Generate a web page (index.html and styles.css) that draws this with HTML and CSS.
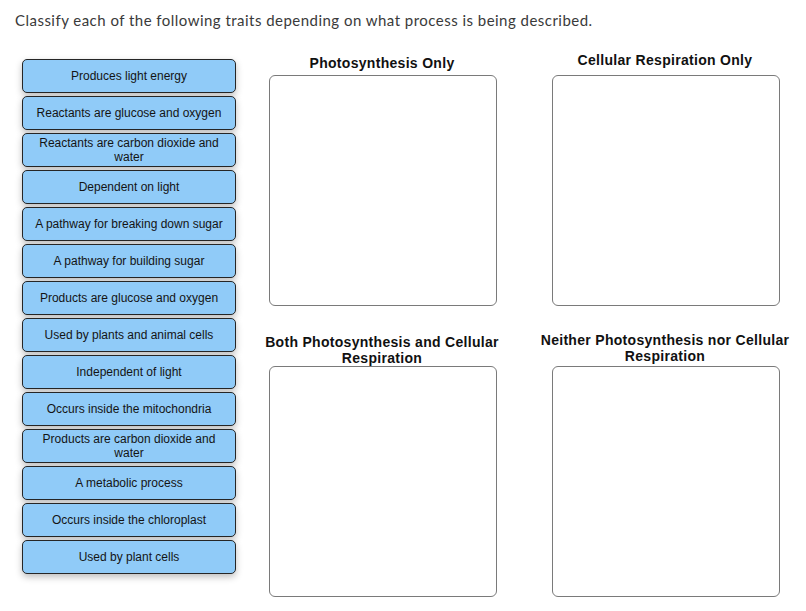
FILE: index.html
```html
<!DOCTYPE html>
<html lang="en">
<head>
<meta charset="utf-8">
<title>Classify traits</title>
<link rel="stylesheet" href="styles.css">
</head>
<body>
<p class="prompt">Classify each of the following traits depending on what process is being described.</p>
<div class="workspace">
  <ul class="bank">
    <li class="chip">Produces light energy</li>
    <li class="chip">Reactants are glucose and oxygen</li>
    <li class="chip">Reactants are carbon dioxide and water</li>
    <li class="chip">Dependent on light</li>
    <li class="chip">A pathway for breaking down sugar</li>
    <li class="chip">A pathway for building sugar</li>
    <li class="chip">Products are glucose and oxygen</li>
    <li class="chip">Used by plants and animal cells</li>
    <li class="chip">Independent of light</li>
    <li class="chip">Occurs inside the mitochondria</li>
    <li class="chip">Products are carbon dioxide and water</li>
    <li class="chip">A metabolic process</li>
    <li class="chip">Occurs inside the chloroplast</li>
    <li class="chip">Used by plant cells</li>
  </ul>
  <div class="zones">
    <section class="zone">
      <h3 class="zone-head pad-4">Photosynthesis Only</h3>
      <div class="drop"></div>
    </section>
    <section class="zone">
      <h3 class="zone-head pad-7">Cellular Respiration Only</h3>
      <div class="drop"></div>
    </section>
    <section class="zone">
      <h3 class="zone-head">Both Photosynthesis and Cellular Respiration</h3>
      <div class="drop"></div>
    </section>
    <section class="zone">
      <h3 class="zone-head pad-2">Neither Photosynthesis nor Cellular Respiration</h3>
      <div class="drop"></div>
    </section>
  </div>
</div>
</body>
</html>
```
FILE: styles.css
```css
html, body {
  margin: 0;
  padding: 0;
  background: #fff;
}

body {
  width: 806px;
  height: 611px;
  overflow: hidden;
}

.prompt {
  margin: 0;
  padding: 10px 0 0 15px;
  font-family: Lato, "Liberation Sans", sans-serif;
  font-size: 15px;
  line-height: 20px;
  letter-spacing: 0.47px;
  color: #3a3a3a;
}

.workspace {
  display: flex;
  align-items: flex-start;
  gap: 33px;
  padding-left: 22px;
}

.bank {
  list-style: none;
  margin: 29px 0 0;
  padding: 0;
  width: 214px;
  display: flex;
  flex-direction: column;
  gap: 3px;
}

.chip {
  box-sizing: border-box;
  height: 34px;
  display: flex;
  align-items: center;
  justify-content: center;
  padding: 0 12px;
  text-align: center;
  background: #90cbf8;
  border: 1px solid #262626;
  border-radius: 5px;
  box-shadow: 0 3px 7px rgba(0, 0, 0, 0.26);
  font-family: "Liberation Sans", Arial, sans-serif;
  font-size: 12px;
  line-height: 14px;
  color: #141414;
}

.zones {
  margin-top: 9px;
  display: grid;
  grid-template-columns: 228px 228px;
  column-gap: 55px;
  row-gap: 24px;
}

.zone {
  display: flex;
  flex-direction: column;
}

/* headings may run a little wider than their drop box */
.zone-head {
  box-sizing: border-box;
  height: 36px;
  margin: 0 -14px 0 -16px;
  display: flex;
  align-items: flex-end;
  justify-content: center;
  text-align: center;
  font-family: "Liberation Sans", Arial, sans-serif;
  font-size: 14px;
  font-weight: bold;
  line-height: 16px;
  letter-spacing: 0.3px;
  color: #111;
}

.zone-head.pad-4 { padding-bottom: 4px; }
.zone-head.pad-7 { padding-bottom: 7px; }
.zone-head.pad-2 { padding-bottom: 2px; }

.drop {
  box-sizing: border-box;
  height: 231px;
  border: 1px solid #7a7a7a;
  border-radius: 6px;
  background: #fff;
}
```
